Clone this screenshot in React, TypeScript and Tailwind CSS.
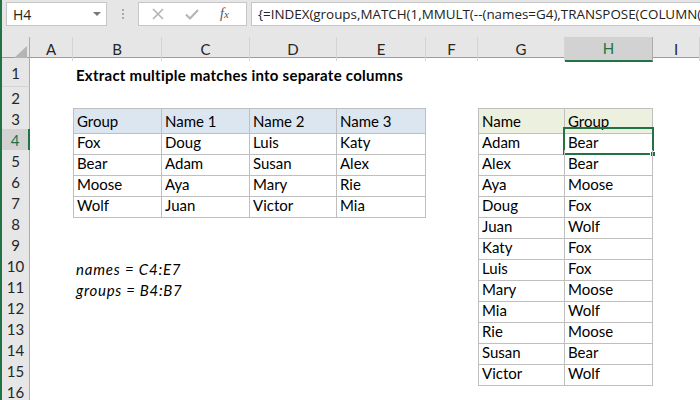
import React from "react";

const COLS = ["A", "B", "C", "D", "E", "F", "G", "H", "I"];
const GRID = "grid grid-cols-[28px_43px_89px_88px_87px_89px_52px_87px_88px_1fr]";
const FORMULA =
  "{=INDEX(groups,MATCH(1,MMULT(--(names=G4),TRANSPOSE(COLUMN(names)^0)),0))}";

const LEFT = [
  ["Group", "Name 1", "Name 2", "Name 3"],
  ["Fox", "Doug", "Luis", "Katy"],
  ["Bear", "Adam", "Susan", "Alex"],
  ["Moose", "Aya", "Mary", "Rie"],
  ["Wolf", "Juan", "Victor", "Mia"],
];

const RIGHT = [
  ["Name", "Group"],
  ["Adam", "Bear"],
  ["Alex", "Bear"],
  ["Aya", "Moose"],
  ["Doug", "Fox"],
  ["Juan", "Wolf"],
  ["Katy", "Fox"],
  ["Luis", "Fox"],
  ["Mary", "Moose"],
  ["Mia", "Wolf"],
  ["Rie", "Moose"],
  ["Susan", "Bear"],
  ["Victor", "Wolf"],
];

type Cell = { text?: string; cls?: string; selected?: boolean };

/* build cell contents for row r (1-based), column c (0 = A) */
function getCell(r: number, c: number): Cell {
  // title
  if (r === 1 && c === 1)
    return {
      text: "Extract multiple matches into separate columns",
      cls: "font-bold whitespace-nowrap tracking-[0.25px]",
    };
  if (r === 10 && c === 1)
    return { text: "names = C4:E7", cls: "italic whitespace-nowrap tracking-[0.8px]" };
  if (r === 11 && c === 1)
    return { text: "groups = B4:B7", cls: "italic whitespace-nowrap tracking-[0.7px]" };

  // left table B3:E7
  if (r >= 3 && r <= 7 && c >= 1 && c <= 4) {
    const head = r === 3;
    let cls = "border-r border-b border-[#bfbfbf]";
    if (head) cls += " border-t bg-[#dce6f1]";
    if (c === 1) cls += " border-l";
    return { text: LEFT[r - 3][c - 1], cls };
  }

  // right table G3:H15
  if (r >= 3 && r <= 15 && c >= 6 && c <= 7) {
    const head = r === 3;
    let cls = "border-r border-b border-[#bfbfbf]";
    if (head) cls += " border-t bg-[#ebf1de]";
    if (c === 6) cls += " border-l";
    return { text: RIGHT[r - 3][c - 6], cls, selected: r === 4 && c === 7 };
  }

  return {};
}

export default function App() {
  const rows = Array.from({ length: 16 }, (_, i) => i + 1);

  return (
    <div className="w-[700px] h-[400px] overflow-hidden bg-white border-l-2 border-[#217346] font-['Lato',sans-serif] text-black">
      {/* FORMULA BAR */}
      <div className="h-[37px] bg-[#e6e6e6] flex items-start pt-[2px] gap-0">
        <div className="ml-[4px] w-[101px] h-[24px] bg-white border border-[#c6c6c6] flex items-center justify-between pl-[6px] pr-[5px]">
          <span className="text-[14px] text-[#222] font-['Open_Sans',sans-serif]">H4</span>
          <span className="w-0 h-0 border-l-[4px] border-r-[4px] border-t-[4px] border-l-transparent border-r-transparent border-t-[#777]" />
        </div>
        <div className="w-[31px] h-[24px] flex flex-col items-center justify-center gap-[2px]">
          <span className="w-[2px] h-[2px] bg-[#aaa]" />
          <span className="w-[2px] h-[2px] bg-[#aaa]" />
          <span className="w-[2px] h-[2px] bg-[#aaa]" />
        </div>
        <div className="w-[109px] h-[24px] bg-white border border-[#c6c6c6] flex items-center">
          <svg width="14" height="14" viewBox="0 0 14 14" className="ml-[12px]">
            <path d="M2 2 L12 12 M12 2 L2 12" stroke="#b4b4b4" strokeWidth="1.6" fill="none" />
          </svg>
          <svg width="16" height="14" viewBox="0 0 16 14" className="ml-[19px]">
            <path d="M2 7.5 L6 11.5 L14 3" stroke="#b4b4b4" strokeWidth="2" fill="none" />
          </svg>
          <span className="ml-[20px] text-[14px] italic text-[#555] font-['Liberation_Serif',serif] leading-none">
            f<span className="text-[11px]">x</span>
          </span>
        </div>
        <div className="ml-[4px] flex-1 h-[24px] bg-white border border-[#c6c6c6] border-r-0 flex items-center pl-[6px] overflow-hidden">
          <span className="text-[13.4px] text-[#222] whitespace-nowrap font-['Open_Sans',sans-serif]">
            {FORMULA}
          </span>
        </div>
      </div>

      {/* COLUMN HEADERS */}
      <div className={`${GRID} h-[21px] bg-[#e6e6e6] border-b border-[#9b9b9b]`}>
        <div className="border-r border-[#ababab] flex items-end justify-end pr-[2px] pb-[3px]">
          <span className="w-0 h-0 border-l-[13px] border-b-[12px] border-l-transparent border-b-[#b4b4b4]" />
        </div>
        {COLS.map((c) => (
          <div
            key={c}
            className={
              c === "H"
                ? "bg-[#d2d2d2] border-r border-[#ababab] border-b-2 border-b-[#217346] -mb-px flex items-center justify-center text-[15px] text-[#217346]"
                : "border-r border-[#d4d4d4] flex items-center justify-center text-[15px] text-[#262626]"
            }
          >
            {c}
          </div>
        ))}
      </div>

      {/* ROWS */}
      {rows.map((r) => (
        <div key={r} className={`${GRID} ${r === 1 ? "h-[29px]" : "h-[21px]"}`}>
          <div
            className={
              r === 4
                ? "bg-[#d2d2d2] border-r-2 border-[#217346] border-b border-b-[#d4d4d4] flex items-end justify-center pb-[2px] text-[15px] text-[#217346]"
                : "bg-[#e6e6e6] border-r border-[#ababab] border-b border-b-[#d4d4d4] flex items-end justify-center pb-[2px] text-[15px] text-[#262626]"
            }
          >
            {r}
          </div>
          {COLS.map((_, ci) => {
            const cell = getCell(r, ci);
            return (
              <div
                key={ci}
                className={`relative flex items-end pl-[3px] pb-[2px] text-[15px] leading-[19px] ${cell.cls ?? ""}`}
              >
                {cell.text}
                {cell.selected && (
                  <>
                    <div className="absolute left-[-2px] right-[-2px] top-[-2px] bottom-[-1px] border-2 border-[#217346]" />
                    <div className="absolute right-[-4px] bottom-[-3px] w-[6px] h-[6px] bg-[#217346] border border-white" />
                  </>
                )}
              </div>
            );
          })}
        </div>
      ))}
    </div>
  );
}
